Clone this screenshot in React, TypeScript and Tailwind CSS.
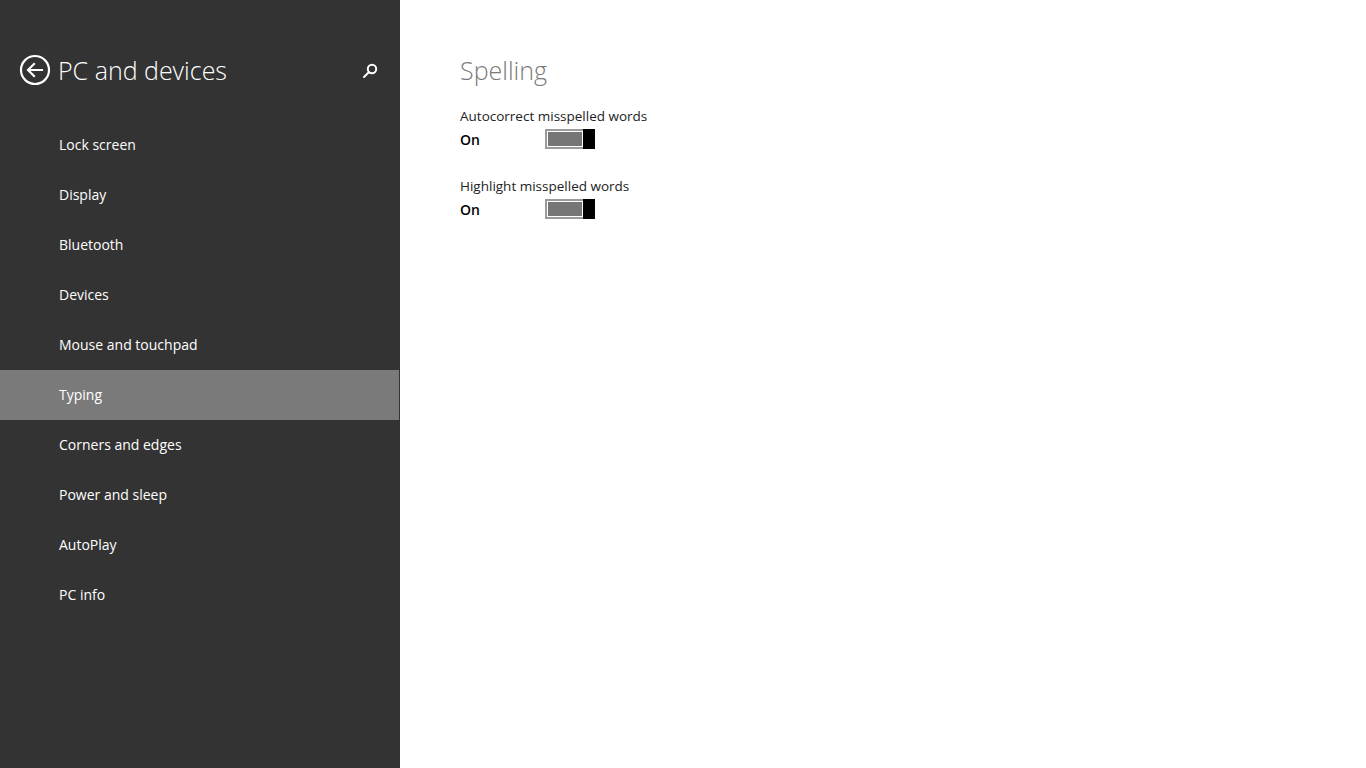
import React from 'react';

const items = [
  'Lock screen',
  'Display',
  'Bluetooth',
  'Devices',
  'Mouse and touchpad',
  'Typing',
  'Corners and edges',
  'Power and sleep',
  'AutoPlay',
  'PC info',
];

const Toggle: React.FC = () => (
  <div className="flex h-[20px] w-[50px] border-2 border-[#9a9a9a] bg-white">
    <div className="m-px flex-1 bg-[#767676]" />
    <div className="-my-[2px] -mr-[2px] w-[12px] bg-black" />
  </div>
);

const Setting: React.FC<{ label: string }> = ({ label }) => (
  <div className="mb-[24px]">
    <div className="h-[22px] text-[13.5px] leading-[22px] text-[#222]">{label}</div>
    <div className="flex h-[24px] items-center">
      <span className="w-[85px] text-[14px] font-semibold text-black">On</span>
      <Toggle />
    </div>
  </div>
);

export default function App() {
  return (
    <div className="flex h-[768px] w-[1366px] bg-white" style={{ fontFamily: '"Open Sans", "Noto Sans", sans-serif' }}>
      <aside className="flex w-[400px] flex-col bg-[#333333]">
        <div className="flex h-[120px] items-start pt-[54px]">
          <div className="flex w-[58px] justify-center pl-[16px] pr-[4px]">
            <svg width="32" height="32" viewBox="0 0 32 32" fill="none" stroke="white" strokeWidth="2.2">
              <circle cx="16" cy="16" r="14" />
              <path d="M23 16H9.5M15 10l-6 6 6 6" strokeLinecap="square" />
            </svg>
          </div>
          <h1 className="flex-1 text-[25px] font-light leading-[32px] text-white">PC and devices</h1>
          <div className="pr-[22px] pt-[9px]">
            <svg width="16" height="16" viewBox="0 0 16 16" fill="none" stroke="white" strokeWidth="2">
              <circle cx="10" cy="6" r="4.2" />
              <path d="M7 9l-5 5" strokeLinecap="round" />
            </svg>
          </div>
        </div>
        <nav className="flex flex-col">
          {items.map((item) => (
            <div
              key={item}
              className={`flex h-[50px] items-center pb-[2px] pl-[59px] text-[14px] text-white ${item === 'Typing' ? 'mr-px bg-[#7a7a7a]' : ''}`}
            >
              {item}
            </div>
          ))}
        </nav>
      </aside>
      <main className="flex-1 pl-[60px] pt-[53px]">
        <h2 className="mb-[18px] h-[34px] text-[25px] font-light leading-[34px] text-[#7a7a7a]">Spelling</h2>
        <Setting label="Autocorrect misspelled words" />
        <Setting label="Highlight misspelled words" />
      </main>
    </div>
  );
}
